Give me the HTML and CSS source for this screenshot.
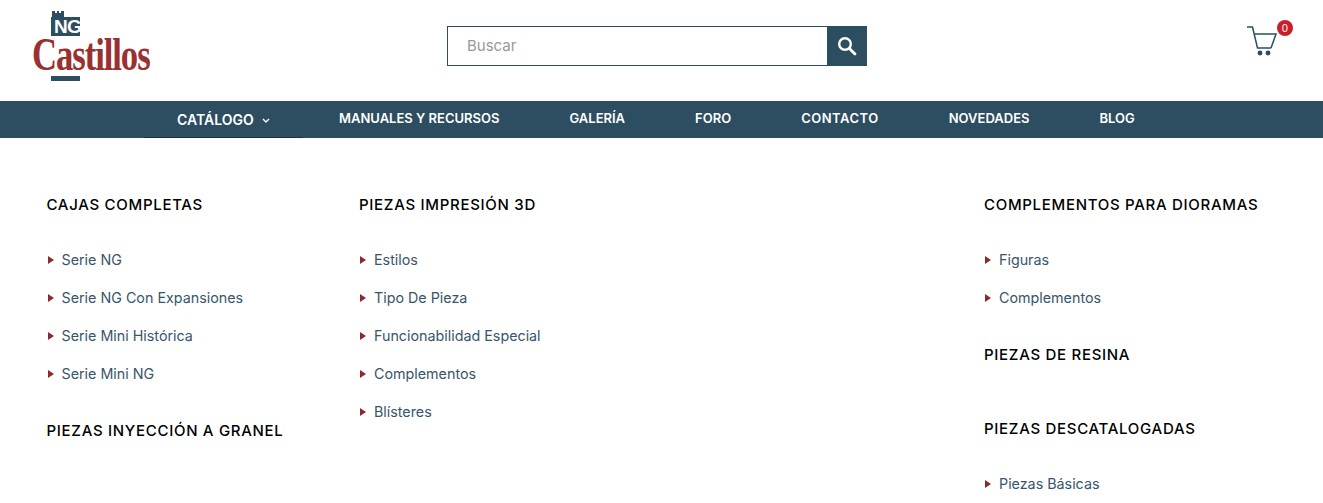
FILE: index.html
```html
<!DOCTYPE html>
<html lang="es">
<head>
  <meta charset="UTF-8">
  <title>NG Castillos</title>
  <link rel="stylesheet" href="styles.css">
</head>
<body>
  <header class="top">
    <a class="logo" href="#">
      <svg class="logo-tower" width="29" height="25" viewBox="0 0 29 25">
        <path fill="#2d4d61" d="M1 0h3v2h2V0h2v2h2V0h3v6h16v19H0V6h1z"/>
        <text class="logo-ng" x="3" y="22">NG</text>
      </svg>
      <span class="logo-name">Castillos</span>
      <span class="logo-bar"></span>
    </a>

    <form class="search">
      <input type="text" placeholder="Buscar">
      <button type="button" aria-label="Buscar">
        <svg width="20" height="20" viewBox="0 0 20 20" fill="none" stroke="#fff">
          <circle cx="8" cy="8" r="5.8" stroke-width="2.4"/>
          <path d="M12.4 12.4l5.6 5.6" stroke-width="2.8" stroke-linecap="round"/>
        </svg>
      </button>
    </form>

    <a class="cart" href="#">
      <svg width="32" height="32" viewBox="0 0 32 32" fill="none" stroke="#2d4d61" stroke-width="1.5">
        <path d="M1 3h5.5l5 21h13.5"/>
        <path d="M8 10h22l-5 14"/>
        <circle cx="14" cy="29" r="1.7" fill="#2d4d61"/>
        <circle cx="22" cy="29" r="1.7" fill="#2d4d61"/>
      </svg>
      <span class="cart-count">0</span>
    </a>
  </header>

  <nav class="nav">
    <a class="nav-item nav-active" href="#">CATÁLOGO
      <svg class="chevron" width="8" height="6" viewBox="0 0 8 6" fill="none" stroke="#fff" stroke-width="1.4"><path d="M1 1l3 3 3-3"/></svg>
    </a>
    <a class="nav-item" href="#">MANUALES Y RECURSOS</a>
    <a class="nav-item" href="#">GALERÍA</a>
    <a class="nav-item" href="#">FORO</a>
    <a class="nav-item nav-spaced" href="#">CONTACTO</a>
    <a class="nav-item" href="#">NOVEDADES</a>
    <a class="nav-item" href="#">BLOG</a>
  </nav>

  <main class="menu">
    <section>
      <h3>CAJAS COMPLETAS</h3>
      <ul>
        <li>Serie NG</li>
        <li>Serie NG Con Expansiones</li>
        <li>Serie Mini Histórica</li>
        <li>Serie Mini NG</li>
      </ul>
      <h3>PIEZAS INYECCIÓN A GRANEL</h3>
    </section>
    <section>
      <h3>PIEZAS IMPRESIÓN 3D</h3>
      <ul>
        <li>Estilos</li>
        <li>Tipo De Pieza</li>
        <li>Funcionabilidad Especial</li>
        <li>Complementos</li>
        <li>Blísteres</li>
      </ul>
    </section>
    <section></section>
    <section>
      <h3>COMPLEMENTOS PARA DIORAMAS</h3>
      <ul>
        <li>Figuras</li>
        <li>Complementos</li>
      </ul>
      <h3 class="solo">PIEZAS DE RESINA</h3>
      <h3>PIEZAS DESCATALOGADAS</h3>
      <ul class="last">
        <li>Piezas Básicas</li>
      </ul>
    </section>
  </main>
</body>
</html>
```

FILE: styles.css
```css
html, body {
  height: 503px;
  overflow: hidden;
}

body {
  margin: 0;
  background: #fff;
  font-family: Inter, "Open Sans", sans-serif;
  color: #2d4d61;
}

a {
  text-decoration: none;
  color: inherit;
}

.top {
  height: 101px;
  display: grid;
  grid-template-columns: 447px 420px 1fr;
  align-items: start;
}

.logo {
  display: flex;
  flex-direction: column;
  width: 120px;
  height: 71px;
  margin: 11px 0 0 32px;
}

.logo-tower {
  flex: none;
  margin-left: 19px;
}

.logo-ng {
  font: 700 19px "Liberation Sans", sans-serif;
  letter-spacing: -0.6px;
  fill: #fff;
}

.logo-name {
  font: 700 32px/36px "Liberation Serif", serif;
  color: #9b3030;
  letter-spacing: -1px;
  white-space: nowrap;
  transform: scale(1.085, 1.44);
  transform-origin: left center;
}

.logo-bar {
  flex: none;
  width: 29px;
  height: 5px;
  margin: 4px 0 0 19px;
  background: #2d4d61;
}

.search {
  display: flex;
  height: 40px;
  margin-top: 26px;
  box-sizing: border-box;
}

.search input {
  flex: 1;
  min-width: 0;
  box-sizing: border-box;
  padding: 0 19px 2px;
  border: 1px solid #2d4d61;
  border-right: 0;
  font: 15px Inter, sans-serif;
  outline: none;
}

.search input::placeholder {
  color: #999;
}

.search button {
  width: 40px;
  padding: 0;
  border: 0;
  background: #2d4d61;
  display: flex;
  align-items: center;
  justify-content: center;
}

.cart {
  justify-self: end;
  position: relative;
  margin: 24px 45px 0 0;
  width: 32px;
  height: 32px;
}

.cart-count {
  position: absolute;
  top: -4px;
  right: -15px;
  width: 16px;
  height: 16px;
  border-radius: 50%;
  background: #c8202a;
  color: #fff;
  font-size: 10px;
  line-height: 16px;
  text-align: center;
}

.nav {
  height: 37px;
  background: #2d4d61;
  display: flex;
  padding-left: 144px;
}

.nav-item {
  padding: 0 35px;
  line-height: 35px;
  font-size: 13px;
  font-weight: 600;
  color: #fff;
  white-space: nowrap;
}

.nav-spaced {
  letter-spacing: 0.5px;
}

.nav-active {
  padding: 0 33px;
  line-height: 37px;
  width: 159px;
  box-sizing: border-box;
  border-bottom: 1px solid #1f2f3a;
  margin-right: 1px;
  font-size: 14px;
}

.chevron {
  margin-left: 5px;
  vertical-align: 1px;
}

.menu {
  display: grid;
  grid-template-columns: repeat(4, 312.5px);
  padding: 57px 0 0 46.5px;
}

.menu h3 {
  margin: 0 0 35px;
  font-size: 15px;
  line-height: 20px;
  font-weight: 500;
  letter-spacing: 0.7px;
  color: #000;
  white-space: nowrap;
}

.menu h3.solo {
  margin-bottom: 54px;
}

.menu ul {
  list-style: none;
  margin: 0 0 37px;
  padding: 0;
}

.menu ul.last {
  margin-bottom: 0;
}

.menu li {
  position: relative;
  height: 20px;
  margin-bottom: 18px;
  padding-left: 15px;
  font-size: 14.3px;
  line-height: 20px;
  color: #37566b;
}

.menu li:last-child {
  margin-bottom: 0;
}

.menu li::before {
  content: "";
  position: absolute;
  left: 1px;
  top: 6px;
  border-left: 6px solid #8c2a2f;
  border-top: 4px solid transparent;
  border-bottom: 4px solid transparent;
}
```
